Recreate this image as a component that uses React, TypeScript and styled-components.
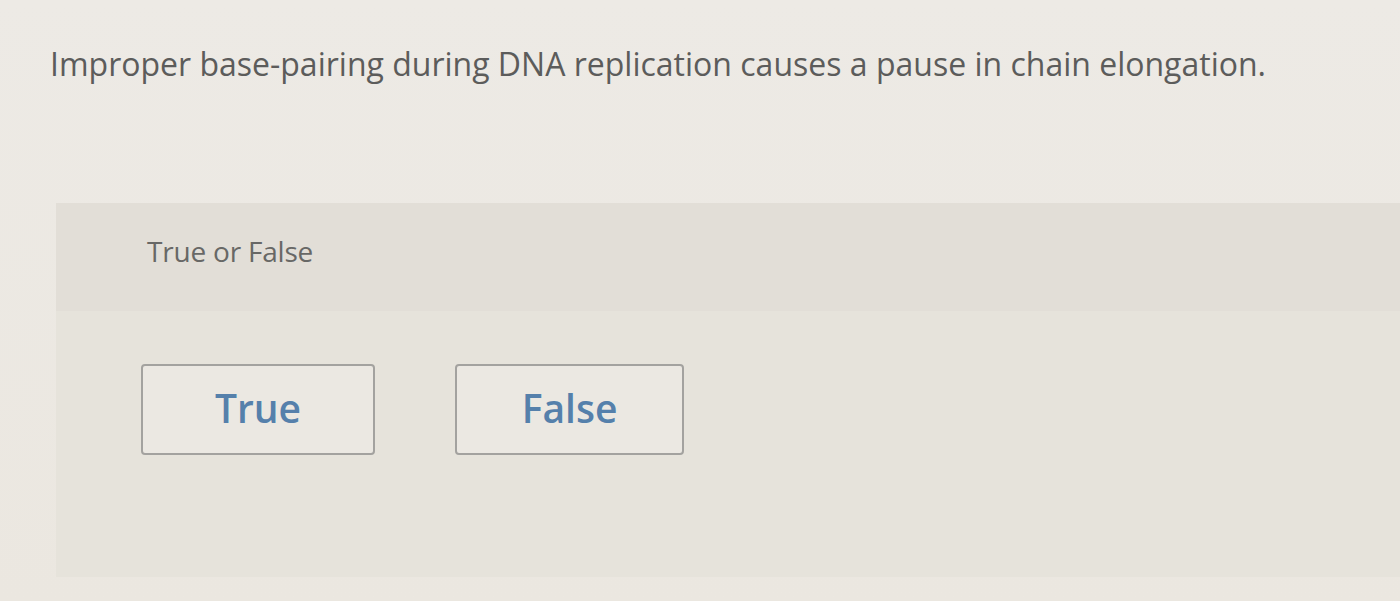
import React from "react";
import styled, { createGlobalStyle } from "styled-components";

const GlobalStyle = createGlobalStyle`
  html, body {
    margin: 0;
    padding: 0;
    background: #ebe7e0;
  }
  body {
    font-family: "Open Sans", Lato, "Liberation Sans", sans-serif;
    overflow: hidden;
  }
`;

const Page = styled.main`
  width: 1400px;
  height: 601px;
  display: flex;
  flex-direction: column;
  background: linear-gradient(180deg, #edeae5 0%, #ebe7e0 100%);
  box-sizing: border-box;
  padding: 40px 0 0 50px;
`;

const Question = styled.h1`
  margin: 0;
  font-size: 32px;
  font-weight: 400;
  color: #5c5c5b;
  letter-spacing: 0;
  line-height: 48px;
`;

const Panel = styled.section`
  margin: 115px 0 0 6px;
  display: flex;
  flex-direction: column;
  height: 374px;
`;

const PanelHeader = styled.div`
  height: 108px;
  background: #e2ded7;
  box-sizing: border-box;
  padding: 29px 0 0 91px;
`;

const Prompt = styled.div`
  font-size: 28px;
  color: #686866;
  line-height: 38px;
  letter-spacing: -0.2px;
`;

const PanelBody = styled.div`
  flex: 1;
  background: #e6e3db;
  display: flex;
  align-items: flex-start;
  gap: 80px;
  padding: 53px 0 0 85px;
`;

const Choice = styled.button<{ $width: number }>`
  width: ${(p) => p.$width}px;
  height: 91px;
  box-sizing: border-box;
  border: 2px solid #a3a29f;
  border-radius: 4px;
  background: #ebe8e2;
  color: #5580ab;
  font-family: inherit;
  font-size: 39px;
  font-weight: 600;
  display: flex;
  align-items: center;
  justify-content: center;
  padding: 0 0 4px;
  cursor: pointer;
`;

export default function App() {
  return (
    <>
      <GlobalStyle />
      <Page>
        <Question>
          Improper base-pairing during DNA replication causes a pause in chain
          elongation.
        </Question>
        <Panel>
          <PanelHeader>
            <Prompt>True or False</Prompt>
          </PanelHeader>
          <PanelBody>
            <Choice $width={234}>True</Choice>
            <Choice $width={229}>False</Choice>
          </PanelBody>
        </Panel>
      </Page>
    </>
  );
}
